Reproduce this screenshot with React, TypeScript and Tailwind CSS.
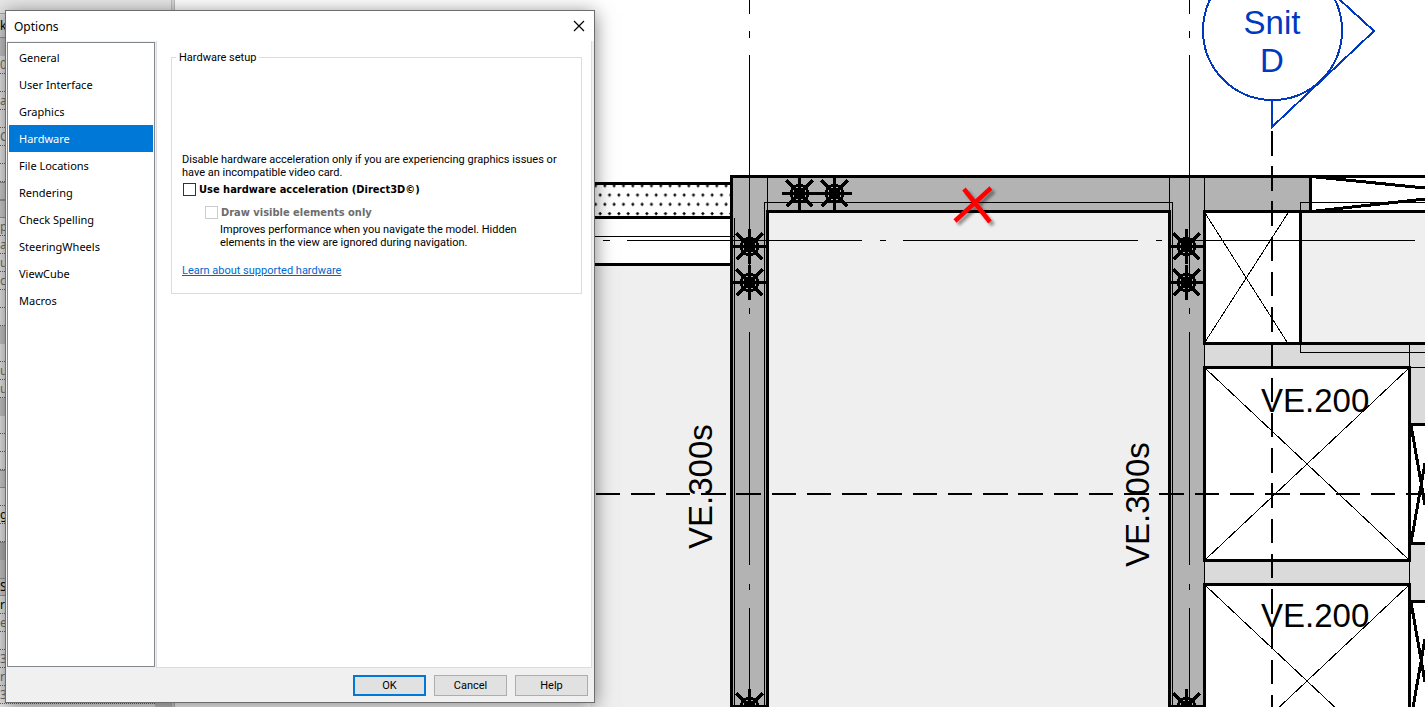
import React, { useState } from 'react';
import clsx from 'clsx';

const PAGES = [
  'General',
  'User Interface',
  'Graphics',
  'Hardware',
  'File Locations',
  'Rendering',
  'Check Spelling',
  'SteeringWheels',
  'ViewCube',
  'Macros',
];

type RowKind = 'cell' | 'head' | 'fill' | 'dark';

interface PaletteRow {
  kind: RowKind;
  text?: string;
  strong?: boolean;
}

const PALETTE_ROWS: PaletteRow[] = [
  { kind: 'fill' },
  { kind: 'cell', text: '0' },
  { kind: 'cell' },
  { kind: 'cell', text: 'al' },
  { kind: 'cell' },
  { kind: 'cell', text: 'C' },
  { kind: 'cell' },
  { kind: 'cell' },
  { kind: 'head' },
  { kind: 'head' },
  { kind: 'cell', text: 'p' },
  { kind: 'cell', text: 'a' },
  { kind: 'cell', text: 'u' },
  { kind: 'cell', text: 'c' },
  { kind: 'cell' },
  { kind: 'cell' },
  { kind: 'fill' },
  { kind: 'cell' },
  { kind: 'cell', text: 'ur' },
  { kind: 'cell', text: 'up' },
  { kind: 'fill' },
  { kind: 'cell' },
  { kind: 'cell' },
  { kind: 'cell' },
  { kind: 'head' },
  { kind: 'cell' },
  { kind: 'cell', text: 'g', strong: true },
  { kind: 'cell' },
  { kind: 'dark' },
  { kind: 'fill' },
  { kind: 'head', text: 'S', strong: true },
  { kind: 'cell', text: 'ru', strong: true },
  { kind: 'cell', text: 'er' },
  { kind: 'cell' },
  { kind: 'cell', text: '3,' },
  { kind: 'cell', text: 'ru' },
  { kind: 'cell', text: '3,' },
  { kind: 'cell' },
];

const ROW_STYLE: Record<RowKind, string> = {
  cell: 'bg-[#ececec] border-b border-dotted border-[#666]',
  head: 'bg-[#d2d2d2] border-y border-[#999]',
  fill: 'bg-[#cacaca]',
  dark: 'bg-[#b4b4b4] border-t border-[#999]',
};

const PropertiesPalette: React.FC = () => (
  <aside className="flex h-full w-[175px] shrink-0 overflow-hidden bg-[#e8e8e8] text-[12px] text-[#707070]">
    <div className="flex w-[155px] flex-col">
      <div className="h-[14px] shrink-0 border-b border-[#aaa]" />
      <div className="flex h-6 shrink-0 items-center border-b border-[#999] bg-[#dcdcdc] text-black">k</div>
      {PALETTE_ROWS.map((row, i) => (
        <div
          key={i}
          className={clsx('flex h-[18px] shrink-0 items-center', ROW_STYLE[row.kind], row.strong && 'text-black')}
        >
          {row.text}
        </div>
      ))}
    </div>
    <div className="mt-[10px] flex-1 bg-[#c4c4c4]" />
    <div className="w-1 border-x border-[#bdbdbd] bg-[#d8d8d8]" />
  </aside>
);

interface PointProps {
  x: number;
  y: number;
}

/* Pile marker: eight arms, a ring and a filled core */
const Pile: React.FC<PointProps> = ({ x, y }) => (
  <g transform={`translate(${x} ${y})`} fill="none" stroke="#000">
    <path d="M-17.500 0H17.500M0-17.500V17.500" strokeWidth="3" />
    <path d="M-13-13L13 13M13-13L-13 13" strokeWidth="3" />
    <circle r="8.500" strokeWidth="2.500" />
    <circle r="6" fill="#000" stroke="none" />
  </g>
);

const PlanView: React.FC = () => (
  <svg
    className="h-full min-w-0 flex-1"
    viewBox="175 0 1250 707"
    preserveAspectRatio="xMinYMin slice"
    fontFamily='"Liberation Sans", Arial, sans-serif'
    fontSize="33"
  >
    <defs>
      <pattern id="insulation" x="595.500" y="190.500" width="9.330" height="18.600" patternUnits="userSpaceOnUse">
        <path d="M3.200 4.500h3M4.700 3v3" stroke="#000" strokeWidth="1.400" />
        <path d="M0 12.300v3M0 13.800h1.500M9.330 12.300v3M7.800 13.800h1.500" stroke="#000" strokeWidth="1.400" />
      </pattern>
      <filter id="markShadow" x="-30%" y="-30%" width="170%" height="170%">
        <feDropShadow dx="3" dy="3" stdDeviation="1.500" floodColor="#000" floodOpacity="0.4" />
      </filter>
    </defs>

    <g shapeRendering="crispEdges">
      {/* floors */}
      <rect x="590" y="265" width="142" height="442" fill="#efefef" />
      <rect x="767" y="211" width="402" height="496" fill="#efefef" />
      <rect x="1300" y="211" width="125" height="132" fill="#efefef" />
      <rect x="1204" y="343" width="221" height="364" fill="#dadada" />
      <rect x="590" y="184" width="142" height="33" fill="url(#insulation)" />

      {/* walls */}
      <path d="M731 176H1311V211H1204V707H1169V211H767V707H731Z" fill="#b3b3b3" />

      {/* shafts */}
      <path d="M1205 367H1409V560H1205ZM1205 584H1409V707H1205ZM1410 424H1425V543H1410ZM1410 601H1425V707H1410Z" fill="#fff" />

      <g fill="none" stroke="#000" strokeWidth="3">
        <path d="M590 183.500H731M590 217.500H731M590 264.500H731" />
        <path d="M731.500 707V176.500H1425" />
        <path d="M767.500 707V211.500H1169.500V707" />
        <path d="M1204.500 343V211.500H1425M1310.500 178V211M1300.500 211V343M1203 343.500H1425" />
        <path d="M1204.500 367.500H1409.500V560.500H1204.500Z" />
        <path d="M1204.500 707V584.500H1409.500V707" />
        <path d="M1425 424.500H1410M1425 543.500H1410M1425 601.500H1410" />
      </g>

      <g fill="none" stroke="#000" strokeWidth="1">
        <path d="M590 236.500H734.500M734.500 218V707M764.500 707V202.500H1172.500V707" />
        <path d="M767.500 178V211M1169.500 178V211M1204.500 178V211" />
        <path d="M1425 202.500H1300.500V211M1300.500 345V352.500H1425" />
        <path d="M1204.500 345V367M1409.500 345V367.500H1425M1204.500 562V584M1409.500 562V584" />
        <path d="M1205 213L1287 342M1288 213L1205 342" />
        <path d="M1206 369L1408 559M1408 369L1206 559M1206 586L1408 776M1408 586L1206 776" />
        {/* grid axes */}
        <path d="M749.500 0V14M749.500 31V38M749.500 55V290M749.500 308V314M749.500 332V565M749.500 584V590M749.500 608V707" />
        <path d="M1189.500 0V14M1189.500 31V38M1189.500 55V290M1189.500 308V314M1189.500 332V565M1189.500 584V590M1189.500 608V707" />
        <path d="M603 240.500H610M627 240.500H862M880 240.500H886M903 240.500H1138M1156 240.500H1162M1180 240.500H1415" />
      </g>

      <g fill="none" stroke="#000" strokeWidth="2">
        <path d="M595.500 494H1425" strokeDasharray="24.500 10.740" />
        <path d="M1272 131V707" strokeDasharray="24.500 10.740" />
      </g>

      <g fill="none" stroke="#000" strokeWidth="3">
        <path d="M1316 177L1425 188M1316 211L1425 199" />
        <path d="M1411 425L1425 505M1411 543L1425 463M1411 602L1425 682M1411 719L1425 639" />
      </g>

      <Pile x={799.5} y={193.5} />
      <Pile x={834.5} y={193.5} />
      <Pile x={749.5} y={246.5} />
      <Pile x={749.5} y={282.5} />
      <Pile x={1186.5} y={246.5} />
      <Pile x={1186.5} y={282.5} />
      <Pile x={749.5} y={706.5} />
      <Pile x={1186.5} y={706.5} />

      {/* section head */}
      <g fill="none" stroke="#0039c0" strokeWidth="2">
        <circle cx="1272.500" cy="30.500" r="69.500" />
        <path d="M1339 -1L1374 31L1272 127V100" />
      </g>
    </g>

    <g fill="#0039c0" textAnchor="middle">
      <text x="1272" y="34">Snit</text>
      <text x="1272" y="72">D</text>
    </g>
    <text x="1261" y="412">VE.200</text>
    <text x="1261" y="627">VE.200</text>
    <text transform="translate(712 549) rotate(-90)">VE.300s</text>
    <text transform="translate(1149 567) rotate(-90)">VE.300s</text>

    <g filter="url(#markShadow)" stroke="#f00" strokeWidth="4.500">
      <path d="M964 189L990 222M991 188L955 221" />
    </g>
  </svg>
);

interface DialogButtonProps {
  label: string;
  primary?: boolean;
}

const DialogButton: React.FC<DialogButtonProps> = ({ label, primary }) => (
  <button
    type="button"
    className={clsx(
      "flex h-[21px] w-[73px] items-center justify-center bg-[#e1e1e1] font-['Roboto','Noto_Sans',sans-serif]",
      primary ? 'border-2 border-[#0078d7]' : 'border border-[#adadad]'
    )}
  >
    {label}
  </button>
);

const OptionsDialog: React.FC = () => {
  const [page, setPage] = useState('Hardware');
  const [accelerated, setAccelerated] = useState(false);

  return (
    <div
      role="dialog"
      aria-label="Options"
      className="absolute left-[5px] top-[10px] flex h-[693px] w-[590px] flex-col border border-[#6d6d6d] bg-[#f0f0f0] font-['Noto_Sans',sans-serif] text-[11px] leading-[13px] text-black shadow-[0_3px_18px_rgba(0,0,0,0.5)]"
    >
      <header className="flex h-[30px] shrink-0 items-center justify-between bg-white pl-2 pr-[9px]">
        <h1 className="text-[12px]">Options</h1>
        <button type="button" aria-label="Close">
          <svg width="12" height="12" viewBox="0 0 12 12" stroke="#000" strokeWidth="1.200">
            <path d="M1 1L11 11M11 1L1 11" />
          </svg>
        </button>
      </header>

      <div className="flex min-h-0 flex-1">
        <div className="flex border-t border-[#f0f0f0] pb-px pl-px pr-px">
          <ul className="w-[148px] border border-[#828790] bg-white p-px">
            {PAGES.map((name) => (
              <li key={name}>
                <button
                  type="button"
                  onClick={() => setPage(name)}
                  className={clsx(
                    'flex h-[27px] w-full items-center pl-[10px] text-left',
                    name === page && 'bg-[#0078d7] text-white'
                  )}
                >
                  {name}
                </button>
              </li>
            ))}
          </ul>
        </div>

        <section className="mr-[2px] flex-1 border-x border-b border-[#dcdcdc] bg-white pl-[14px] pr-[9px] pt-[10px] font-['Roboto','Noto_Sans',sans-serif]">
          <fieldset className="border border-[#dcdcdc] px-[10px] pb-4">
            <legend className="-ml-[6px] px-[3px]">Hardware setup</legend>
            <p className="pt-[89px]">
              Disable hardware acceleration only if you are experiencing graphics issues or
              have an incompatible video card.
            </p>
            <label className="mt-1 flex h-[13px] items-center gap-[3px] pl-px font-['DejaVu_Sans_Condensed','Noto_Sans',sans-serif] font-bold">
              <input
                type="checkbox"
                checked={accelerated}
                onChange={(e) => setAccelerated(e.target.checked)}
                className="size-[13px] appearance-none border border-[#333] bg-white checked:bg-[#0078d7]"
              />
              Use hardware acceleration (Direct3D©)
            </label>
            <label className="mt-[10px] flex h-[13px] items-center gap-[3px] pl-[23px] font-['DejaVu_Sans_Condensed','Noto_Sans',sans-serif] font-bold text-[#6d6d6d]">
              <input
                type="checkbox"
                disabled={!accelerated}
                className="size-[13px] appearance-none border border-[#ccc] bg-white checked:bg-[#0078d7]"
              />
              Draw visible elements only
            </label>
            <p className="mt-1 pl-[38px]">
              Improves performance when you navigate the model. Hidden
              <br />
              elements in the view are ignored during navigation.
            </p>
            <a href="#supported-hardware" className="mt-[15px] block text-[#0066cc] underline">
              Learn about supported hardware
            </a>
          </fieldset>
        </section>
      </div>

      <footer className="flex h-[34px] shrink-0 items-start justify-end gap-2 pr-[6px] pt-[7px]">
        <DialogButton label="OK" primary />
        <DialogButton label="Cancel" />
        <DialogButton label="Help" />
      </footer>
    </div>
  );
};

export default function App() {
  return (
    <main className="relative flex h-screen overflow-hidden bg-white font-['Noto_Sans',sans-serif]">
      <PropertiesPalette />
      <PlanView />
      <OptionsDialog />
    </main>
  );
}
